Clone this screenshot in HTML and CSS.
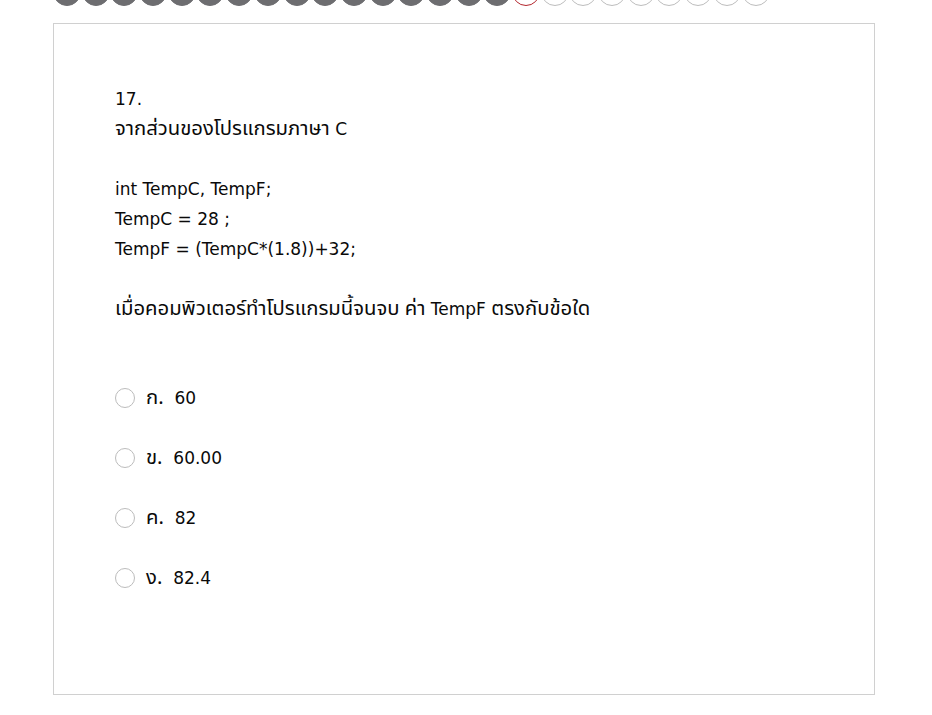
FILE: index.html
```html
<!DOCTYPE html>
<html lang="th">
<head>
<meta charset="utf-8">
<title>Quiz</title>
<link rel="stylesheet" href="styles.css">
</head>
<body>
<div class="page">
  <nav class="steps">
    <span class="dot done"></span><span class="dot done"></span><span class="dot done"></span><span class="dot done"></span>
    <span class="dot done"></span><span class="dot done"></span><span class="dot done"></span><span class="dot done"></span>
    <span class="dot done"></span><span class="dot done"></span><span class="dot done"></span><span class="dot done"></span>
    <span class="dot done"></span><span class="dot done"></span><span class="dot done"></span><span class="dot done"></span>
    <span class="dot current"></span>
    <span class="dot"></span><span class="dot"></span><span class="dot"></span><span class="dot"></span>
    <span class="dot"></span><span class="dot"></span><span class="dot"></span><span class="dot"></span>
  </nav>
  <section class="card">
    <div class="question">
      <p class="line">17.</p>
      <p class="line"><span class="th">จากส่วนของโปรแกรมภาษา</span> C</p>
      <p class="line blank"></p>
      <p class="line">int TempC, TempF;</p>
      <p class="line">TempC = 28 ;</p>
      <p class="line">TempF = (TempC*(1.8))+32;</p>
      <p class="line blank"></p>
      <p class="line"><span class="th">เมื่อคอมพิวเตอร์ทำโปรแกรมนี้จนจบ ค่า</span> TempF <span class="th">ตรงกับข้อใด</span></p>
    </div>
    <ul class="options">
      <li class="option"><span class="radio"></span><span class="label"><span class="th">ก.</span>&nbsp; 60</span></li>
      <li class="option"><span class="radio"></span><span class="label"><span class="th">ข.</span>&nbsp; 60.00</span></li>
      <li class="option"><span class="radio"></span><span class="label"><span class="th">ค.</span>&nbsp; 82</span></li>
      <li class="option"><span class="radio"></span><span class="label"><span class="th">ง.</span>&nbsp; 82.4</span></li>
    </ul>
  </section>
</div>
</body>
</html>
```
FILE: styles.css
```css
html, body {
  margin: 0;
  padding: 0;
  background: #ffffff;
}
body {
  font-family: "DejaVu Sans", "Noto Sans Thai", sans-serif;
  font-size: 17px;
  color: #0a0a0a;
}
.page {
  padding-left: 53px;
  width: 822px;
}
.steps {
  display: flex;
  gap: 0.7px;
  margin-top: -22px;
  height: 28px;
}
.dot {
  box-sizing: border-box;
  width: 28px;
  height: 28px;
  border-radius: 50%;
  border: 1px solid #bdbdbd;
  background: #ffffff;
  flex: none;
}
.dot.done {
  background: #6d6d70;
  border-color: #6d6d70;
}
.dot.current {
  border-color: #b3262d;
}
.card {
  margin-top: 17px;
  border: 1px solid #d0d0d0;
  padding: 60px 61px 86px;
  height: 672px;
  box-sizing: border-box;
}
.question {
  line-height: 30px;
}
.line {
  margin: 0;
  height: 30px;
  white-space: pre;
}
.th {
  font-family: "Noto Sans Thai", "DejaVu Sans", sans-serif;
  font-size: 20.3px;
  line-height: 1;
}
.options {
  list-style: none;
  margin: 44px 0 0;
  padding: 0;
}
.option {
  display: flex;
  align-items: center;
  gap: 11px;
  height: 60px;
}
.radio {
  box-sizing: border-box;
  width: 20px;
  height: 20px;
  border-radius: 50%;
  border: 1px solid #bcbcbc;
  flex: none;
}
.label {
  line-height: 30px;
  white-space: pre;
}
```
